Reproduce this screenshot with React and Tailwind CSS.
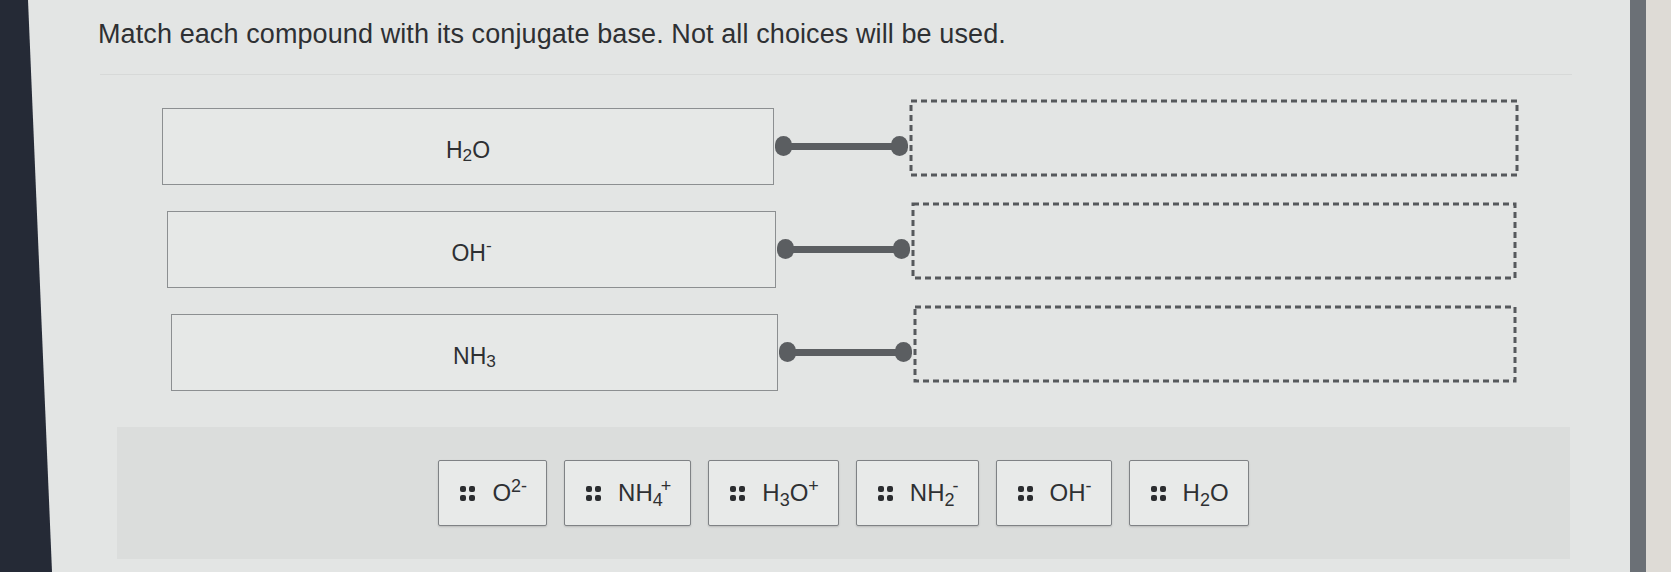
import React from "react";

const pairs = [
  { id: "h2o", label: <>H<sub>2</sub>O</>, box: "ml-[110px] w-[612px]", zone: "w-[606px]" },
  { id: "oh", label: <>OH<sup>-</sup></>, box: "ml-[115px] w-[609px]", zone: "w-[602px]" },
  { id: "nh3", label: <>NH<sub>3</sub></>, box: "ml-[119px] w-[607px]", zone: "w-[600px]" },
];

const choices = [
  { id: "o", label: <>O<sup>2-</sup></> },
  { id: "nh4", label: <>NH<sub>4</sub><sup className="-ml-[2px]">+</sup></> },
  { id: "h3o", label: <>H<sub>3</sub>O<sup>+</sup></> },
  { id: "nh2", label: <>NH<sub>2</sub><sup className="-ml-[2px]">-</sup></> },
  { id: "oh", label: <>OH<sup>-</sup></> },
  { id: "h2o", label: <>H<sub>2</sub>O</> },
];

function Handle() {
  return (
    <div className="grid grid-cols-2 gap-[3px]">
      {[0, 1, 2, 3].map((i) => (
        <span key={i} className="h-[6px] w-[6px] rounded-[2px] bg-[#2b2d30]" />
      ))}
    </div>
  );
}

function Connector() {
  return (
    <div className="mt-[35px] ml-[1px] flex w-[133px] shrink-0 items-center">
      <span className="h-[20px] w-[17px] shrink-0 rounded-full bg-[#5b5e61]" />
      <span className="-mx-[3px] h-[7px] flex-1 bg-[#5b5e61]" />
      <span className="h-[20px] w-[17px] shrink-0 rounded-full bg-[#5b5e61]" />
    </div>
  );
}

function DropZone({ width }) {
  return (
    <div className={`relative ml-[3px] h-[74px] ${width}`}>
      <svg className="absolute inset-0 h-full w-full overflow-visible">
        <rect
          x="0"
          y="0"
          width="100%"
          height="100%"
          fill="none"
          stroke="#56595c"
          strokeWidth="3"
          strokeDasharray="6 4"
        />
      </svg>
    </div>
  );
}

export default function App() {
  return (
    <div className="flex h-[572px] w-full overflow-hidden bg-[#e3e5e4] font-['Liberation_Sans',Arial,sans-serif] text-[#2e3033]">
      <div className="w-[52px] shrink-0 bg-[#252a36] [clip-path:polygon(0_0,28px_0,52px_100%,0_100%)]" />

      <div className="flex flex-1 flex-col">
        <h1 className="pl-[46px] pt-[19px] text-[27px] leading-[30px] tracking-[0.1px]">
          Match each compound with its conjugate base. Not all choices will be used.
        </h1>
        <div className="ml-[48px] mt-[25px] w-[1472px] border-t border-[#d7d9d8]" />

        <div className="mt-[26px] flex flex-col gap-[19px]">
          {pairs.map((p) => (
            <div key={p.id} className="flex items-start">
              <div
                className={`${p.box} mt-[7px] flex h-[77px] shrink-0 items-center justify-center border-[1.5px] border-[#8c8f91] bg-[#e6e8e7] pt-[8px] text-[23px]`}
              >
                {p.label}
              </div>
              <Connector />
              <DropZone width={p.zone} />
            </div>
          ))}
        </div>

        <div className="ml-[65px] mt-[36px] flex h-[132px] w-[1453px] items-center justify-center gap-[17px] bg-[#dbdddc]">
          {choices.map((c) => (
            <div
              key={c.id}
              className="flex h-[66px] items-center gap-[17px] rounded-[2px] border-[1.5px] border-[#7f8285] bg-[#e8eae9] pl-[21px] pr-[19px] text-[24px] shadow-[0_1px_2px_rgba(0,0,0,0.15)]"
            >
              <Handle />
              <span>{c.label}</span>
            </div>
          ))}
        </div>
      </div>

      <div className="w-[16px] shrink-0 bg-[#6b7076]" />
      <div className="w-[25px] shrink-0 bg-[#dedbd6]" />
    </div>
  );
}
